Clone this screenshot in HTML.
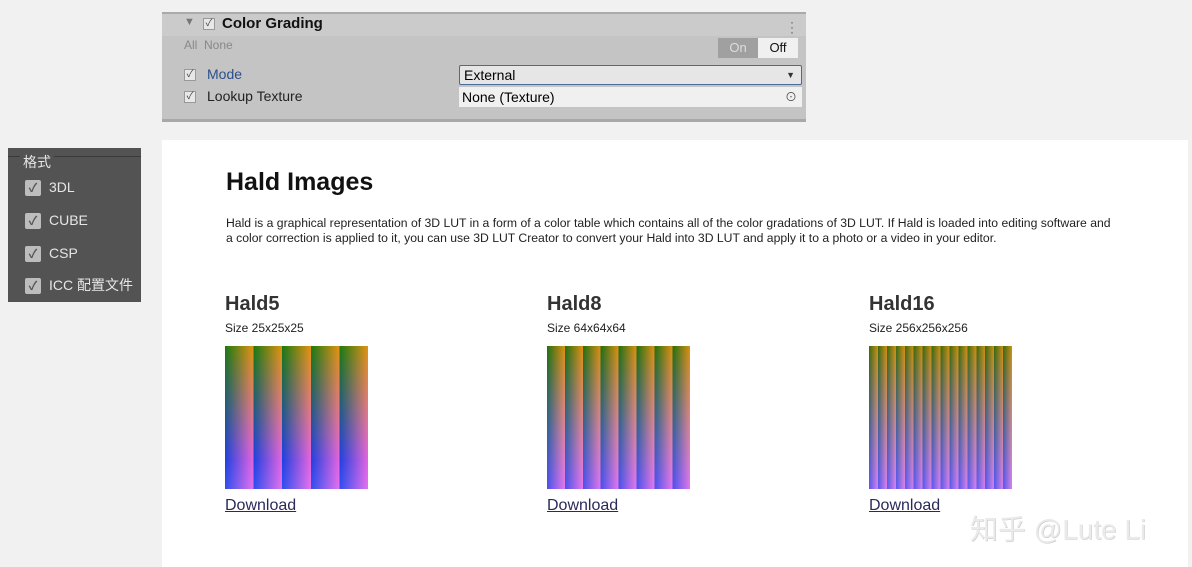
<!DOCTYPE html>
<html><head><meta charset="utf-8"><style>
*{margin:0;padding:0;box-sizing:border-box}
body{width:1192px;height:567px;overflow:hidden;background:#f1f1f1;font-family:"Liberation Sans","Noto Sans CJK SC",sans-serif;position:relative}
.abs{position:absolute}
#unity{left:162px;top:12px;width:644px;height:110px;background:#c4c4c4;border-top:2px solid #aaa;border-bottom:3px solid #a8a8a8}
#unity .hdr{position:absolute;left:0;top:0;width:100%;height:22px;background:#cbcbcb}
.cb{position:absolute;width:12px;height:12px;border:1px solid #999;background:#e8e8e8;font-size:10px;line-height:10px;text-align:center;color:#444}
#fmt{left:8px;top:148px;width:133px;height:154px;background:#535353;color:#e6e6e6;font-size:14px}
#fmt .row{position:absolute;left:17px;height:18px;line-height:18px}
#fmt .box{display:inline-block;width:16px;height:16px;background:#bdbdbd;border-radius:2px;vertical-align:middle;margin-right:8px;color:#555;font-size:12px;line-height:16px;text-align:center;font-weight:bold}
#web{left:162px;top:140px;width:1026px;height:427px;background:#fff}
h1{position:absolute;left:64px;top:28px;font-size:25px;color:#111}
.p{position:absolute;left:64px;top:76px;width:950px;font-size:12.2px;line-height:15px;color:#222;white-space:nowrap}
.h2{position:absolute;font-size:20px;font-weight:bold;color:#333}
.sz{position:absolute;font-size:12px;color:#222}
.lut{position:absolute;width:143px;height:143px;background-blend-mode:screen}
.dl{position:absolute;font-size:16px;color:#2a2a5a;text-decoration:underline}
</style></head><body>
<div id="unity" class="abs">
 <div class="hdr"></div>
 <div class="abs" style="left:22px;top:2px;font-size:11px;color:#777">▼</div>
 <div class="cb" style="left:41px;top:4px">✓</div>
 <div class="abs" style="left:60px;top:1px;font-size:15px;font-weight:bold;color:#111">Color Grading</div>
 <div class="abs" style="left:628px;top:6px;font-size:12px;color:#555;line-height:5px">·<br>·<br>·</div>
 <div class="abs" style="left:22px;top:24px;font-size:12px;color:#888">All&nbsp; None</div>
 <div class="abs" style="left:556px;top:24px;width:40px;height:20px;background:#a0a0a0;color:#ddd;font-size:13px;text-align:center;line-height:20px">On</div>
 <div class="abs" style="left:596px;top:24px;width:40px;height:20px;background:#f0f0f0;color:#111;font-size:13px;text-align:center;line-height:20px">Off</div>
 <div class="cb" style="left:22px;top:55px">✓</div>
 <div class="abs" style="left:45px;top:52px;font-size:14px;color:#2c4f8a">Mode</div>
 <div class="cb" style="left:22px;top:77px">✓</div>
 <div class="abs" style="left:45px;top:74px;font-size:14px;color:#222">Lookup Texture</div>
 <div class="abs" style="left:297px;top:51px;width:343px;height:20px;background:#e6e6e6;border:1px solid #4a6a9a;border-radius:2px;font-size:14px;padding-left:4px;line-height:18px">External<span style="position:absolute;right:6px;font-size:9px;color:#333">▼</span></div>
 <div class="abs" style="left:297px;top:73px;width:343px;height:20px;background:#f0f0f0;font-size:14px;padding-left:3px;line-height:20px">None (Texture)<span style="position:absolute;right:5px;font-size:12px;color:#555">⊙</span></div>
</div>
<div id="fmt" class="abs">
 <div class="abs" style="left:0;top:8px;width:133px;border-top:1px solid #3a3a3a"></div>
 <div class="abs" style="left:12px;top:6px;background:#535353;padding:0 3px;font-size:14px;line-height:16px">格式</div>
 <div class="row" style="top:30px"><span class="box">✓</span>3DL</div>
 <div class="row" style="top:63px"><span class="box">✓</span>CUBE</div>
 <div class="row" style="top:96px"><span class="box">✓</span>CSP</div>
 <div class="row" style="top:128px"><span class="box">✓</span>ICC 配置文件</div>
</div>
<div id="web" class="abs">
 <h1>Hald Images</h1>
 <div class="p">Hald is a graphical representation of 3D LUT in a form of a color table which contains all of the color gradations of 3D LUT. If Hald is loaded into editing software and<br>a color correction is applied to it, you can use 3D LUT Creator to convert your Hald into 3D LUT and apply it to a photo or a video in your editor.</div>
 <div class="h2" style="left:63px;top:153px">Hald5</div>
 <div class="sz" style="left:63px;top:181px">Size 25x25x25</div>
 <div class="lut" style="left:63px;top:206px;background-image:repeating-linear-gradient(180deg,rgba(0,0,0,.25) 0 1px,rgba(0,0,0,0) 1px 3px),repeating-linear-gradient(90deg,#000 0,#e03000 28.6px),linear-gradient(#1a7a10,#2040e0 80%,#3050f0)"></div>
 <div class="dl" style="left:63px;top:357px">Download</div>
 <div class="h2" style="left:385px;top:153px">Hald8</div>
 <div class="sz" style="left:385px;top:181px">Size 64x64x64</div>
 <div class="lut" style="left:385px;top:206px;background-image:repeating-linear-gradient(90deg,#000 0,#d83800 17.9px),linear-gradient(#207010,#3060a0 60%,#4a50f0)"></div>
 <div class="dl" style="left:385px;top:357px">Download</div>
 <div class="h2" style="left:707px;top:153px">Hald16</div>
 <div class="sz" style="left:707px;top:181px">Size 256x256x256</div>
 <div class="lut" style="left:707px;top:206px;background-image:repeating-linear-gradient(90deg,#000 0,#c04000 8.94px),linear-gradient(#3a6a10,#4060a0 60%,#5858f0)"></div>
 <div class="dl" style="left:707px;top:357px">Download</div>
 <div class="abs" style="left:808px;top:368px;font-size:28px;color:#eaeaea;text-shadow:0.5px 0.5px 0 #c4c4c4">知乎 @Lute Li</div>
</div>
</body></html>
